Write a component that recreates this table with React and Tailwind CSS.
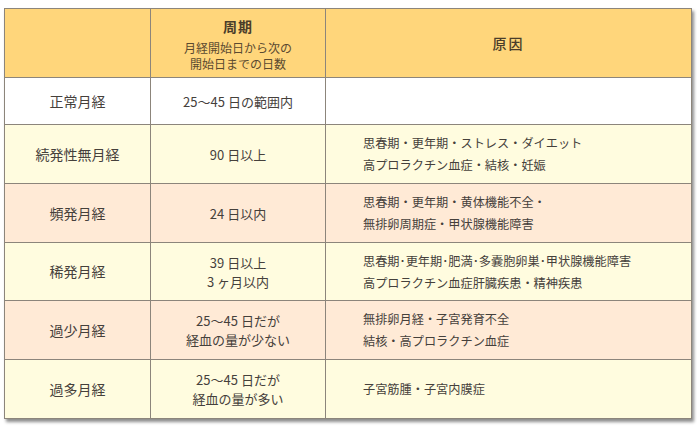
import React from 'react';

const rows = [
    { name: '正常月経', cycle: ['25〜45 日の範囲内'], cause: [], bg: 'bg-white', h: 'h-[47px]' },
    { name: '続発性無月経', cycle: ['90 日以上'], cause: ['思春期・更年期・ストレス・ダイエット', '高プロラクチン血症・結核・妊娠'], bg: 'bg-[#fffcdf]', h: 'h-[59px]' },
    { name: '頻発月経', cycle: ['24 日以内'], cause: ['思春期・更年期・黄体機能不全・', '無排卵周期症・甲状腺機能障害'], bg: 'bg-[#ffead6]', h: 'h-[59px]' },
    { name: '稀発月経', cycle: ['39 日以上', '3 ヶ月以内'], cause: ['思春期･更年期･肥満･多嚢胞卵巣･甲状腺機能障害', '高プロラクチン血症肝臓疾患・精神疾患'], bg: 'bg-[#fffcdf]', h: 'h-[58px]' },
    { name: '過少月経', cycle: ['25〜45 日だが', '経血の量が少ない'], cause: ['無排卵月経・子宮発育不全', '結核・高プロラクチン血症'], bg: 'bg-[#ffead6]', h: 'h-[59px]' },
    { name: '過多月経', cycle: ['25〜45 日だが', '経血の量が多い'], cause: ['子宮筋腫・子宮内膜症'], bg: 'bg-[#fffcdf]', h: 'h-[59px]' },
];

const App = () => {
    return (
        <div className="w-[697px] h-[429px] bg-white pt-[8px] pl-[4px] font-['Noto_Sans_CJK_JP',sans-serif] text-[#45403b]">
            <table className="w-[688px] border-collapse shadow-[2px_3px_3px_rgba(0,0,0,0.45)]">
                <thead>
                    <tr className="bg-[#ffd67b] h-[69px]">
                        <th className="w-[146px] border border-[#8c857b]"></th>
                        <th className="w-[175px] border border-[#8c857b] font-normal text-center pt-[3px]">
                            <div className="text-[14px] leading-[18px] font-bold text-[#4a3d2a] tracking-[1px]">周期</div>
                            <div className="text-[12px] leading-[16px] mt-[5px] text-[#5b4a30]">月経開始日から次の</div>
                            <div className="text-[12px] leading-[16px] text-[#5b4a30]">開始日までの日数</div>
                        </th>
                        <th className="border border-[#8c857b] text-[14px] font-medium text-[#4a3d2a] tracking-[2px]">原因</th>
                    </tr>
                </thead>
                <tbody>
                    {rows.map((r) => (
                        <tr key={r.name} className={`${r.bg} ${r.h}`}>
                            <td className="border border-[#8c857b] text-center text-[14px]">{r.name}</td>
                            <td className="border border-[#8c857b] text-center text-[13px] leading-[19px]">
                                {r.cycle.map((c) => (
                                    <div key={c}>{c}</div>
                                ))}
                            </td>
                            <td className="border border-[#8c857b] pl-[37px] text-[12.2px] leading-[22px] align-middle">
                                {r.cause.map((c) => (
                                    <div key={c}>{c}</div>
                                ))}
                            </td>
                        </tr>
                    ))}
                </tbody>
            </table>
        </div>
    );
};

export default App;
